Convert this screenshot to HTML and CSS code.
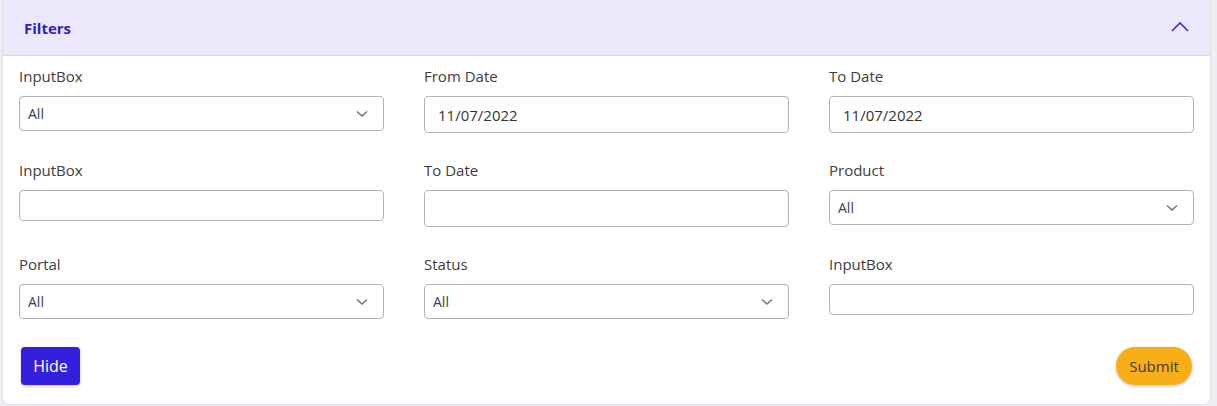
FILE: index.html
```html
<!DOCTYPE html>
<html lang="en">
<head>
<meta charset="utf-8">
<title>Filters</title>
<link rel="stylesheet" href="styles.css">
</head>
<body>
<div class="page">
  <section class="card">
    <header class="card-header">
      <h2 class="title">Filters</h2>
      <svg class="collapse" width="18" height="11" viewBox="0 0 18 11"><path d="M1 10 L9 2 L17 10" fill="none" stroke="#3b2bd4" stroke-width="1.6"/></svg>
    </header>
    <div class="card-body">
      <div class="grid">
        <div class="field">
          <label class="label">InputBox</label>
          <div class="select"><span>All</span><svg width="12" height="8" viewBox="0 0 12 8"><path d="M1 1.5 L6 6 L11 1.5" fill="none" stroke="#6b7280" stroke-width="1.5"/></svg></div>
        </div>
        <div class="field">
          <label class="label">From Date</label>
          <div class="date">11/07/2022</div>
        </div>
        <div class="field">
          <label class="label">To Date</label>
          <div class="date">11/07/2022</div>
        </div>

        <div class="field">
          <label class="label">InputBox</label>
          <div class="text"></div>
        </div>
        <div class="field">
          <label class="label">To Date</label>
          <div class="date"></div>
        </div>
        <div class="field">
          <label class="label">Product</label>
          <div class="select"><span>All</span><svg width="12" height="8" viewBox="0 0 12 8"><path d="M1 1.5 L6 6 L11 1.5" fill="none" stroke="#6b7280" stroke-width="1.5"/></svg></div>
        </div>

        <div class="field">
          <label class="label">Portal</label>
          <div class="select"><span>All</span><svg width="12" height="8" viewBox="0 0 12 8"><path d="M1 1.5 L6 6 L11 1.5" fill="none" stroke="#6b7280" stroke-width="1.5"/></svg></div>
        </div>
        <div class="field">
          <label class="label">Status</label>
          <div class="select"><span>All</span><svg width="12" height="8" viewBox="0 0 12 8"><path d="M1 1.5 L6 6 L11 1.5" fill="none" stroke="#6b7280" stroke-width="1.5"/></svg></div>
        </div>
        <div class="field">
          <label class="label">InputBox</label>
          <div class="text"></div>
        </div>
      </div>
      <div class="actions">
        <button class="btn btn-hide">Hide</button>
        <button class="btn btn-submit">Submit</button>
      </div>
    </div>
  </section>
</div>
</body>
</html>
```

FILE: styles.css
```css
html, body {
  margin: 0;
  padding: 0;
  background: #eceef2;
  font-family: "Open Sans", "Noto Sans", "Liberation Sans", sans-serif;
}

.page {
  padding: 0 7px 1px 3px;
}

.card {
  background: #ffffff;
  border-radius: 0 0 6px 6px;
  box-shadow: 0 0 2px rgba(0, 0, 0, 0.18);
  overflow: hidden;
}

.card-header {
  height: 56px;
  box-sizing: border-box;
  background: #ebe8fb;
  border-bottom: 1px solid #d9d9e3;
  display: flex;
  align-items: center;
  justify-content: space-between;
  padding: 0 21px 0 21px;
}

.title {
  margin: 0;
  font-size: 15px;
  font-weight: 700;
  color: #2f1fc4;
  line-height: 20px;
}

.collapse {
  display: block;
  margin-top: -2px;
}

.card-body {
  padding: 10px 16px 19px;
}

.grid {
  display: grid;
  grid-template-columns: repeat(3, 1fr);
  column-gap: 40px;
  row-gap: 27px;
  align-items: start;
}

.field {
  display: flex;
  flex-direction: column;
}

.label {
  font-size: 15px;
  line-height: 20px;
  color: #3d3d3d;
  margin-bottom: 10px;
}

.select,
.date,
.text {
  box-sizing: border-box;
  border: 1px solid #aeb3c0;
  border-radius: 4px;
  background: #fff;
}

.select {
  height: 35px;
  display: flex;
  align-items: center;
  justify-content: space-between;
  padding: 0 15px 0 8px;
  font-size: 14px;
  color: #374151;
}

.select svg {
  display: block;
}

.date {
  height: 37px;
  display: flex;
  align-items: center;
  padding: 0 13px;
  font-size: 15px;
  color: #333;
}

.text {
  height: 31px;
}

.actions {
  display: flex;
  justify-content: space-between;
  align-items: center;
  margin-top: 28px;
  padding: 0 2px;
}

.btn {
  height: 38px;
  border: none;
  font-family: "Open Sans", "Noto Sans", "Liberation Sans", sans-serif;
  font-size: 15px;
  cursor: pointer;
  box-shadow: 0 1px 3px rgba(0, 0, 0, 0.25);
}

.btn-hide {
  width: 59px;
  background: #341fdc;
  color: #fff;
  border-radius: 4px;
  font-size: 16px;
}

.btn-submit {
  width: 76px;
  background: #f8ae17;
  color: #3f3a33;
  border-radius: 19px;
}
```
